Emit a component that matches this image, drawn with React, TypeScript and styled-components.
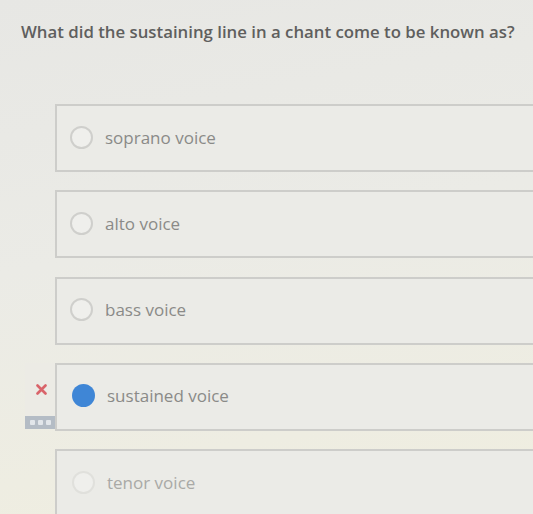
import React from "react";
import styled, { createGlobalStyle } from "styled-components";

const GlobalStyle = createGlobalStyle`
  html, body { margin: 0; padding: 0; }
  body {
    width: 533px;
    height: 514px;
    overflow: hidden;
    background: linear-gradient(170deg, #e7e7e4 0%, #ebebe6 45%, #eeede2 80%, #f0eedf 100%);
    font-family: "Open Sans", "Noto Sans", sans-serif;
  }
`;

const Page = styled.div`
  width: 533px;
  height: 514px;
  overflow: hidden;
`;

const Question = styled.h1`
  margin: 0;
  padding: 21px 0 0 21px;
  font-size: 16.8px;
  line-height: 22px;
  font-weight: 600;
  color: #5f5f5e;
  white-space: nowrap;
`;

const List = styled.div`
  display: flex;
  flex-direction: column;
  gap: 18.3px;
  margin-top: 61px;
  padding-left: 25px;
`;

const Row = styled.div`
  display: flex;
  align-items: stretch;
`;

const Marker = styled.div<{ $show?: boolean }>`
  width: 30px;
  flex: 0 0 30px;
  display: flex;
  flex-direction: column;
  justify-content: space-between;
  align-items: stretch;
  background: ${(p) => (p.$show ? "#ecebe5" : "transparent")};
  margin-bottom: 2px;
`;

const Cross = styled.svg`
  display: block;
  margin: 21px auto 0 11px;
`;

const DotsBar = styled.div`
  height: 13px;
  background: #b4bcc5;
  display: flex;
  align-items: center;
  justify-content: center;
  gap: 3px;
`;

const Dot = styled.span`
  width: 5px;
  height: 5px;
  background: #e2e6ea;
  border-radius: 1px;
`;

const Box = styled.div<{ $shift?: boolean }>`
  flex: 1;
  box-sizing: border-box;
  height: 68px;
  margin-right: -20px;
  border: 2px solid #cdcdca;
  background: #ebebe7;
  display: flex;
  align-items: center;
  padding-left: ${(p) => (p.$shift ? "15px" : "13px")};
  gap: 12px;
`;

const Radio = styled.span<{ $checked?: boolean; $faded?: boolean }>`
  box-sizing: border-box;
  width: 23px;
  height: 23px;
  border-radius: 50%;
  border: ${(p) => (p.$checked ? "none" : `2px solid ${p.$faded ? "#e0e0dc" : "#cfcfcc"}`)};
  background: ${(p) => (p.$checked ? "#3f86d6" : "#efefec")};
  flex: 0 0 auto;
  margin-top: -2px;
`;

const Label = styled.span<{ $faded?: boolean }>`
  font-size: 17px;
  color: ${(p) => (p.$faded ? "#a9a9a6" : "#8a8a88")};
  margin-top: -2px;
`;

type Option = { text: string; checked?: boolean; wrong?: boolean; faded?: boolean };

const options: Option[] = [
  { text: "soprano voice" },
  { text: "alto voice" },
  { text: "bass voice" },
  { text: "sustained voice", checked: true, wrong: true },
  { text: "tenor voice", faded: true },
];

export default function App() {
  return (
    <Page>
      <GlobalStyle />
      <Question>What did the sustaining line in a chant come to be known as?</Question>
      <List>
        {options.map((o) => (
          <Row key={o.text}>
            <Marker $show={o.wrong}>
              {o.wrong && (
                <>
                  <Cross width="11" height="11" viewBox="0 0 11 11">
                    <path d="M1.5 1.5 L9.5 9.5 M9.5 1.5 L1.5 9.5" stroke="#d9646a" strokeWidth="2.6" strokeLinecap="round" />
                  </Cross>
                  <DotsBar>
                    <Dot />
                    <Dot />
                    <Dot />
                  </DotsBar>
                </>
              )}
            </Marker>
            <Box $shift={o.checked || o.faded}>
              <Radio $checked={o.checked} $faded={o.faded} />
              <Label $faded={o.faded}>{o.text}</Label>
            </Box>
          </Row>
        ))}
      </List>
    </Page>
  );
}
